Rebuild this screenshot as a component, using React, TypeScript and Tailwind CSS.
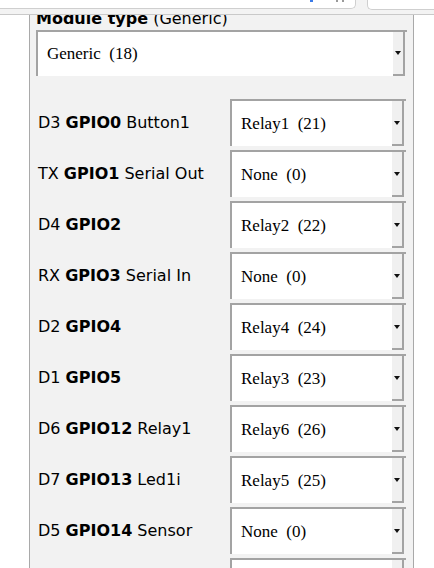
import React from "react";

type GpioRow = {
  pin: string;
  gpio: string;
  note: string;
  value: string;
};

const rows: GpioRow[] = [
  { pin: "D3", gpio: "GPIO0", note: "Button1", value: "Relay1  (21)" },
  { pin: "TX", gpio: "GPIO1", note: "Serial Out", value: "None  (0)" },
  { pin: "D4", gpio: "GPIO2", note: "", value: "Relay2  (22)" },
  { pin: "RX", gpio: "GPIO3", note: "Serial In", value: "None  (0)" },
  { pin: "D2", gpio: "GPIO4", note: "", value: "Relay4  (24)" },
  { pin: "D1", gpio: "GPIO5", note: "", value: "Relay3  (23)" },
  { pin: "D6", gpio: "GPIO12", note: "Relay1", value: "Relay6  (26)" },
  { pin: "D7", gpio: "GPIO13", note: "Led1i", value: "Relay5  (25)" },
  { pin: "D5", gpio: "GPIO14", note: "Sensor", value: "None  (0)" },
  { pin: "", gpio: "", note: "", value: "" },
];

const sans = { fontFamily: '"DejaVu Sans", Verdana, sans-serif' };
const serif = { fontFamily: '"Liberation Serif", "Times New Roman", serif' };

const Arrow = () => (
  <svg width="6" height="4" viewBox="0 0 6 4" className="block">
    <path d="M0 0 H6 L3 4 Z" fill="#111" />
  </svg>
);

const FakeSelect = ({ label, className }: { label: string; className: string }) => (
  <div className={`flex border-t-2 border-l-2 border-[#a3a3a3] ${className}`}>
    <div className="flex-1 bg-white flex items-center pl-[9px] text-[17px] text-black whitespace-pre" style={serif}>
      {label}
    </div>
    <div className="w-[12px] bg-[#f0f0f0] border-r-2 border-b-2 border-[#a3a3a3] flex items-center justify-center">
      <Arrow />
    </div>
    <div className="w-[2px]" />
  </div>
);

export default function App() {
  return (
    <div className="w-[434px] h-[568px] overflow-hidden bg-white flex flex-col">
      {/* browser toolbar edge */}
      <div className="h-[15px] shrink-0 bg-[#f3f3f3] border-b border-[#c9c9c9] flex items-start">
        <div className="w-[356px] h-[9px] bg-white border-r border-b border-[#cfcfcf] rounded-br-[5px] relative">
          <span className="absolute left-[310px] top-0 w-[3px] h-[2px] bg-[#3b7be8]" />
          <span className="absolute left-[336px] top-0 w-[2px] h-[2px] bg-[#9a9a9a]" />
          <span className="absolute left-[342px] top-0 w-[2px] h-[2px] bg-[#9a9a9a]" />
        </div>
        <div className="ml-[11px] flex-1 h-[10px] bg-white border-l border-b border-[#cfcfcf] rounded-bl-[5px]" />
      </div>

      <div className="ml-[29px] w-[385px] flex-1 bg-[#f2f2f2] border-x border-[#a9a9a9] pl-[6px]" style={sans}>
        <div className="h-[15px] overflow-hidden">
          <div className="-mt-[6px] leading-[20px] text-[16px] text-black">
            <b>Module type</b> (Generic)
          </div>
        </div>
        <FakeSelect label="Generic  (18)" className="w-[371px] h-[46px]" />

        <div className="mt-[23px] flex flex-col">
          {rows.map((row, i) => (
            <div key={i} className="h-[51px] flex items-start">
              <div className="w-[194px] h-[47px] pl-[2px] flex items-center text-[16px] text-black whitespace-nowrap">
                {row.pin && (
                  <span>
                    {row.pin} <b>{row.gpio}</b>
                    {row.note ? ` ${row.note}` : ""}
                  </span>
                )}
              </div>
              <FakeSelect label={row.value} className="w-[176px] h-[47px]" />
            </div>
          ))}
        </div>
      </div>
    </div>
  );
}
